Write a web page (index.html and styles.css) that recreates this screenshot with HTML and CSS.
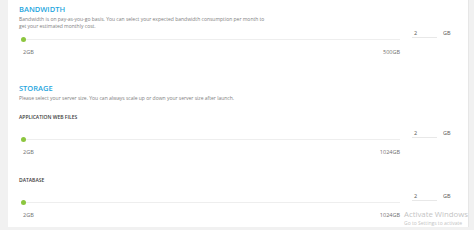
FILE: index.html
```html
<!DOCTYPE html>
<html lang="en">

<head>
    <meta charset="UTF-8">
    <meta name="viewport" content="width=device-width, initial-scale=1.0">
    <title>Server size</title>
    <link rel="stylesheet" href="styles.css">
</head>

<body>
    <div class="panel">
        <div class="section">
            <h2>BANDWIDTH</h2>
            <p class="desc">Bandwidth is on pay-as-you-go basis. You can select your expected bandwidth consumption per month to<br>get your estimated monthly cost.</p>
            <div class="slider first">
                <div class="range">
                    <div class="track"><span class="dot"></span></div>
                    <div class="ends"><span>2GB</span><span>500GB</span></div>
                </div>
                <div class="amount">
                    <div class="input">2</div>
                    <span class="unit">GB</span>
                </div>
            </div>
        </div>

        <div class="section">
            <h2>STORAGE</h2>
            <p class="desc">Please select your server size. You can always scale up or down your server size after launch.</p>
            <h3>APPLICATION WEB FILES</h3>
            <div class="slider">
                <div class="range">
                    <div class="track"><span class="dot"></span></div>
                    <div class="ends"><span>2GB</span><span>1024GB</span></div>
                </div>
                <div class="amount">
                    <div class="input">2</div>
                    <span class="unit">GB</span>
                </div>
            </div>
            <h3 class="db">DATABASE</h3>
            <div class="slider">
                <div class="range">
                    <div class="track"><span class="dot"></span></div>
                    <div class="ends"><span>2GB</span><span>1024GB</span></div>
                </div>
                <div class="amount">
                    <div class="input">2</div>
                    <span class="unit">GB</span>
                </div>
            </div>
        </div>
    </div>

    <div class="watermark">
        <div class="wm-title">Activate Windows</div>
        <div class="wm-sub">Go to Settings to activate</div>
    </div>
</body>

</html>
```

FILE: styles.css
```css
*{
    margin: 0;
    padding: 0;
    box-sizing: border-box;
}
html, body{
    height: 100%;
    overflow: hidden;
}
body{
    background-color: #f1f1f1;
    font-family: "Open Sans", "Liberation Sans", sans-serif;
    position: relative;
}
.panel{
    margin-left: 8px;
    width: 461px;
    height: 227px;
    background-color: #fff;
    border-right: 1px solid #e6e6e6;
    padding: 4px 0 0 11px;
}
.section + .section{
    margin-top: 27px;
}
h2{
    font-size: 7.5px;
    line-height: 10px;
    font-weight: 600;
    color: #26a6de;
}
.desc{
    margin-top: 2px;
    font-size: 5px;
    line-height: 7px;
    color: #808080;
}
h3{
    margin-top: 12px;
    font-size: 5px;
    line-height: 7px;
    font-weight: 600;
    color: #3a3a3a;
}
h3.db{
    margin-top: 21px;
}
.slider{
    display: flex;
    margin-top: 9px;
}
.slider.first{
    margin-top: 0;
}
.range{
    width: 381px;
    padding-top: 7px;
}
.track{
    position: relative;
    height: 5px;
    margin-left: 2px;
}
.track::before{
    content: "";
    position: absolute;
    left: 2px;
    right: 0;
    top: 2px;
    height: 1px;
    background-color: #eeeeee;
}
.dot{
    position: absolute;
    left: 0;
    top: 0;
    width: 5px;
    height: 5px;
    border-radius: 50%;
    background-color: #8cc63f;
}
.ends{
    display: flex;
    justify-content: space-between;
    margin-top: 7px;
    padding-left: 4px;
    font-size: 5.5px;
    line-height: 7px;
    color: #707070;
}
.amount{
    display: flex;
    align-items: flex-start;
    margin-left: 12px;
    font-size: 5.5px;
    line-height: 7px;
    color: #555;
}
.input{
    width: 25px;
    padding-left: 2px;
    border-bottom: 1px solid #e8e8e8;
}
.unit{
    margin-left: 6px;
}
.watermark{
    position: absolute;
    left: 404px;
    top: 208px;
    white-space: nowrap;
    font-family: "Open Sans", "Liberation Sans", sans-serif;
    color: #c4c4c4;
}
.wm-title{
    font-size: 7.8px;
    line-height: 12px;
}
.wm-sub{
    font-size: 5px;
    line-height: 7px;
}
```
